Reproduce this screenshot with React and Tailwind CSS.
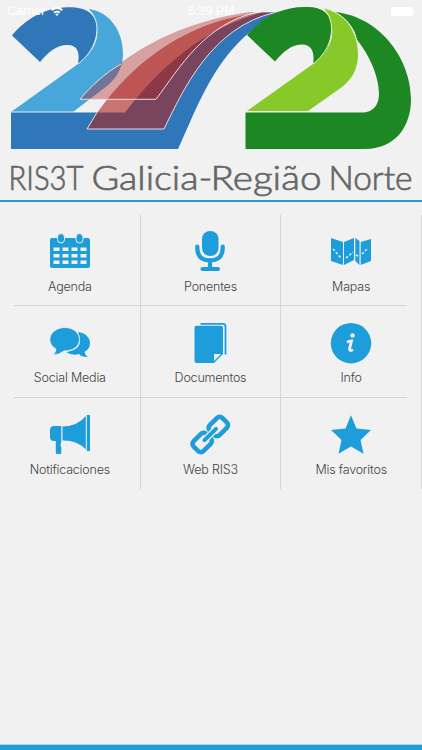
import React from 'react';

const Header = () => (
  <header className="relative h-[202px] border-b-2 border-[#2a99d3]">
    <svg viewBox="0 0 422 200" className="block w-full h-[200px]" role="img">
      {/* first 2 */}
      <path d="M12 35.500C25 20 44 7.500 68 7.300C86 7 95 13 97 27C97 43 90 56 78 64C80 53 78 45 67 45C57 45 48 52 40 62Z" fill="#3077b9" />
      <path d="M88 9C108 11 123 29 123 54C123 69 115 81 103 89L73 112H11L78 64C95 51 101 37 95 20C94 15 91 11 88 9Z" fill="#47a6da" />
      <path d="M88 9C103 21 99 48 78 64M11 112H74" fill="none" stroke="#dceefa" strokeWidth="1" />
      {/* road */}
      <path d="M11 112.500H125C150 80 195 30 262 12.500H280C228 38 207 84 190 122L178 149H11Z" fill="#3077b9" />
      <path d="M80 99.300C112 66 160 25 250 12H256C205 24 180 67 156 99.300Z" fill="#b12a2a" fillOpacity="0.400" />
      <path d="M87 129C115 82 170 22 262 12.500H275C212 27 184 88 164 129Z" fill="#aa231f" fillOpacity="0.600" />
      <path d="M121 64C105 73 91 86 80 99.300H156C180 67 205 24 256 12.500M97 112.500L87 129H164C184 88 212 27 275 12.500" fill="none" stroke="#f0d7df" strokeWidth="1" />
      {/* second 2 and 0 */}
      <path d="M335 12C382 17 411 61 411 99C411 128 394 149 365 149H245.500V112.500H362C373 112.500 379 105 379 94C379 75 368 53 357 40C355 28 347 19 335 12Z" fill="#1d8724" />
      <path d="M247 35C262 18 280 7 305 7C321 6 330 13 332 25C332 43 326 56 313 64C315 53 312 44 301 44.500C291 45 283 52 275 61.500Z" fill="#1d8724" />
      <path d="M323 8C344 11 358 31 358 54C358 69 352 79 342 87L308 111H247L313 64C330 51 336 37 330 20C329 15 326 11 323 8Z" fill="#86c928" />
      <path d="M323 8C337 21 334 48 313 64M323 8C344 13 352 25 357 41" fill="none" stroke="#e5f5cc" strokeWidth="1" />
      <g fontFamily="Lato, sans-serif" fontWeight="300" fontSize="33.500" fill="#666" stroke="#666" strokeWidth="0.700">
        <text x="8.500" y="189.500" textLength="75" lengthAdjust="spacingAndGlyphs">RIS3T</text>
        <text x="91.500" y="189.500" textLength="121" lengthAdjust="spacingAndGlyphs">Galicia-</text>
        <text x="210.500" y="189.500" textLength="111" lengthAdjust="spacingAndGlyphs">Região</text>
        <text x="328.500" y="189.500" textLength="84" lengthAdjust="spacingAndGlyphs">Norte</text>
      </g>
    </svg>
    <div className="absolute inset-x-0 top-0 h-[22px] flex items-center pl-[7px] pr-[7px] font-['Liberation_Sans',sans-serif] text-[12.5px] text-white">
      <span className="w-[181px] flex items-center gap-1.5">
        Carrier
        <svg viewBox="0 0 12 10" className="w-3 h-2.5">
          <path d="M0 3.500Q6 -2 12 3.500L10.700 5Q6 1 1.300 5ZM2.500 6Q6 3 9.500 6L8.200 7.400Q6 5.500 3.800 7.400ZM6 10L4.300 8.200Q6 7 7.700 8.200Z" fill="currentColor" />
        </svg>
      </span>
      <span className="grow font-medium">5:39 PM</span>
      <span className="w-[22px] h-[9px] bg-white rounded-[1px]" />
      <span className="ml-px w-px h-[3px] bg-white" />
    </div>
  </header>
);

const Icon = ({ children }) => (
  <svg viewBox="0 0 42 42" className="w-[42px] h-[42px] overflow-visible" fill="#1e9ddb">
    {children}
  </svg>
);

const items = [
  {
    label: 'Agenda',
    icon: (
      <>
        <path d="M3 6H39Q41 6 41 8V34Q41 36 39 36H3Q1 36 1 34V8Q1 6 3 6Z" />
        <path d="M4.500 15.500H10.500V19H4.500ZM13.500 15.500H19.500V19H13.500ZM22.500 15.500H28.500V19H22.500ZM31.500 15.500H37.500V19H31.500ZM4.500 22H10.500V25.500H4.500ZM13.500 22H19.500V25.500H13.500ZM22.500 22H28.500V25.500H22.500ZM31.500 22H37.500V25.500H31.500ZM4.500 28.500H10.500V32H4.500ZM13.500 28.500H19.500V32H13.500ZM22.500 28.500H28.500V32H22.500ZM31.500 28.500H37.500V32H31.500Z" fill="#f1f1f1" />
        <rect x="8.500" y="1.500" width="7" height="9.500" rx="3.500" stroke="#f1f1f1" />
        <rect x="27" y="1.500" width="7" height="9.500" rx="3.500" stroke="#f1f1f1" />
      </>
    ),
  },
  {
    label: 'Ponentes',
    icon: (
      <>
        <rect x="13" y="-1" width="16.500" height="25" rx="8" />
        <path d="M8.300 14.500V17Q9 28.500 21 28.500Q33 28.500 33.700 17V14.500M21 28V37M13.500 37H29" fill="none" stroke="#1e9ddb" strokeWidth="4.200" strokeLinecap="round" />
      </>
    ),
  },
  {
    label: 'Mapas',
    icon: (
      <>
        <path d="M1 6L13 10V33L1 29ZM14 10L24 6V28L14 33ZM25.300 6L29.500 9V33L25.300 29ZM30.700 10L41 7V29L30.700 33Z" />
        <path d="M3 17L11 26M16 26L23 20M26 23L29 24.500M32 22L38 16" fill="none" stroke="#f1f1f1" strokeWidth="1.500" strokeDasharray="2.500 1.800" />
      </>
    ),
  },
  {
    label: 'Social Media',
    icon: (
      <>
        <path d="M29 8C36 9 41 13 41 19Q41 25 35.500 28Q36 31 39 33Q32 33 30 30Q23 32 17 28Q31 26 31 17Q31 12 29 8Z" />
        <path d="M16 3.500C24 3.500 30.500 8.500 30.500 15.500S24 27 15 27Q10 31 3 31Q7 29 7 25Q.8 21.500 .8 15.500C.8 8.500 8 3.500 16 3.500Z" stroke="#f1f1f1" strokeWidth=".8" />
      </>
    ),
  },
  {
    label: 'Documentos',
    icon: (
      <>
        <path d="M11.500 -.2H34Q36.500 -.2 36.500 2.300V30.500" fill="none" stroke="#1e9ddb" strokeWidth="1.800" />
        <path d="M7.500 1.800H32Q34 1.800 34 3.800V30L25 39H7.500Q5.500 39 5.500 37V3.800Q5.500 1.800 7.500 1.800Z" />
        <path d="M25 37V30H32Z" fill="#f1f1f1" />
      </>
    ),
  },
  {
    label: 'Info',
    icon: (
      <>
        <circle cx="21" cy="19.200" r="20.200" />
        <circle cx="22.500" cy="11.400" r="2.200" fill="#f1f1f1" />
        <path d="M17 18.300Q19 17.200 21.500 17L19.500 25Q19.500 27.500 23 25.800" fill="none" stroke="#f1f1f1" strokeWidth="2.800" />
      </>
    ),
  },
  {
    label: 'Notificaciones',
    icon: (
      <path d="M5 11H12.300V26L11.500 30L12.300 33V38Q12.300 39 11 39H8Q6.800 39 6.800 38V26H5Q1 26 1 22V15Q1 11 5 11ZM13.500 11.500Q29 11 36.800 1V34.500Q28 25 13.500 25.500ZM37.800 0H41V36H37.800Z" />
    ),
  },
  {
    label: 'Web RIS3',
    icon: (
      <g fill="none" stroke="#1e9ddb" strokeWidth="4.600">
        <rect x="-7" y="-9" width="14" height="18" rx="4" transform="translate(29.300 11.500) rotate(45)" />
        <rect x="-7" y="-9" width="14" height="18" rx="4" transform="translate(13.200 27.500) rotate(45)" />
        <path d="M17 23.700L25.500 15.300" stroke="#f1f1f1" strokeWidth="6.600" />
        <path d="M15.500 25.200L27 13.800" strokeWidth="4" strokeLinecap="round" />
      </g>
    ),
  },
  {
    label: 'Mis favoritos',
    icon: <path d="M21 .2L26.500 13.500L41 15L30.500 25L33.500 38.800L21 31.500L8.500 38.800L11.500 25L1 15L15.500 13.500Z" />,
  },
];

const rule = 'border-[#d5d5d5]';

export default function App() {
  return (
    <main className="h-[750px] flex flex-col bg-[#f1f1f1] overflow-hidden">
      <Header />
      <nav className="mt-[12.5px] grid grid-cols-3 auto-rows-[91.5px]">
        {items.map(({ label, icon }, i) => (
          <a
            key={label}
            className={`flex border-r ${rule} ${i % 3 === 0 ? 'pl-3.5' : ''} ${i % 3 === 2 ? 'pr-3.5' : ''}`}
          >
            <span
              className={`grow flex flex-col items-center pt-[17.5px] ${i < 6 ? 'border-b' : ''} ${rule} ${i % 3 === 0 ? 'pr-3.5' : ''} ${i % 3 === 2 ? 'pl-3.5' : ''}`}
            >
              <Icon>{icon}</Icon>
              <span className="mt-[2.5px] h-5 leading-5 whitespace-nowrap text-[12.5px] tracking-[-0.2px] font-light text-[#444] font-['Inter','Liberation_Sans',sans-serif]">
                {label}
              </span>
            </span>
          </a>
        ))}
      </nav>
      <footer className="mt-auto h-[6px] bg-[#1e9ddb] border-t border-[#a5d8ef]" />
    </main>
  );
}
